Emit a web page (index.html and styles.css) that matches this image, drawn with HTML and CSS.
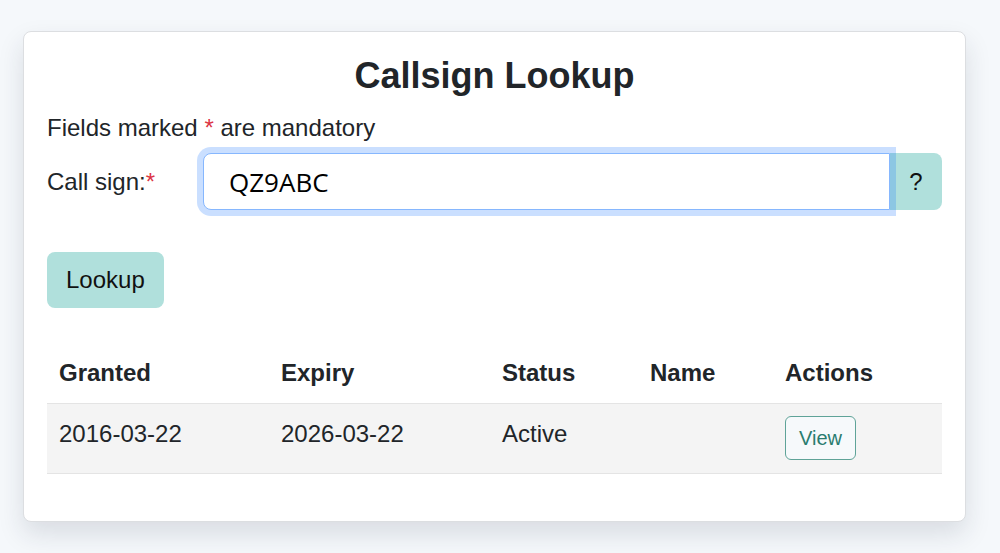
FILE: index.html
```html
<!DOCTYPE html>
<html lang="en">
<head>
<meta charset="utf-8">
<title>Callsign Lookup</title>
<link rel="stylesheet" href="styles.css">
</head>
<body>
<main class="card">
  <h1 class="title">Callsign Lookup</h1>
  <p class="note">Fields marked <span class="req">*</span> are mandatory</p>
  <div class="form-row">
    <label class="label" for="cs">Call sign:<span class="req">*</span></label>
    <div class="input-group">
      <input class="input" id="cs" type="text" value="QZ9ABC">
      <button class="help-btn" type="button">?</button>
    </div>
  </div>
  <button class="lookup-btn" type="button">Lookup</button>
  <table class="results">
    <thead>
      <tr>
        <th class="c1">Granted</th>
        <th class="c2">Expiry</th>
        <th class="c3">Status</th>
        <th class="c4">Name</th>
        <th class="c5">Actions</th>
      </tr>
    </thead>
    <tbody>
      <tr>
        <td>2016-03-22</td>
        <td>2026-03-22</td>
        <td>Active</td>
        <td></td>
        <td><button class="view-btn" type="button">View</button></td>
      </tr>
    </tbody>
  </table>
</main>
</body>
</html>
```

FILE: styles.css
```css
* { box-sizing: border-box; }

html, body {
  background: #f5f8fb;
}

body {
  margin: 0;
  min-height: 553px;
  font-family: "Liberation Sans", Arial, sans-serif;
  font-size: 24px;
  line-height: 36px;
  color: #212529;
}

.card {
  width: 943px;
  margin: 31px 0 0 23px;
  background: #fff;
  border: 1px solid #dcdee1;
  border-radius: 8px;
  padding: 23px 23px 47px;
  box-shadow: 0 12px 26px rgba(30, 40, 60, 0.13);
}

.title {
  margin: 0;
  font-size: 36px;
  line-height: 42px;
  font-weight: 700;
  text-align: center;
  color: #212529;
}

.note {
  margin: 13px 0 0;
}

.req { color: #dc3545; }

.form-row {
  display: flex;
  align-items: center;
  margin-top: 7px;
}

.label {
  width: 156px;
  flex: none;
}

.input-group {
  flex: 1;
  display: flex;
  height: 57px;
}

.input {
  position: relative;
  z-index: 1;
  flex: 1;
  min-width: 0;
  height: 57px;
  margin: 0;
  padding: 0 25px;
  border: 1px solid #86b7fe;
  border-radius: 8px 0 0 8px;
  box-shadow: 0 0 0 6px rgba(13, 110, 253, 0.22);
  outline: none;
  background: #fff;
  font-family: "Open Sans", "Noto Sans", sans-serif;
  font-size: 26px;
  color: #000;
}

.help-btn {
  width: 52px;
  height: 57px;
  flex: none;
  margin: 0;
  border: none;
  border-radius: 0 8px 8px 0;
  background: #b0e0dc;
  font-family: "Liberation Sans", Arial, sans-serif;
  font-size: 24px;
  color: #111;
  padding: 0;
}

.lookup-btn {
  display: block;
  margin-top: 42px;
  height: 56px;
  padding: 0 19px;
  border: none;
  border-radius: 8px;
  background: #b0e0dc;
  font-family: "Liberation Sans", Arial, sans-serif;
  font-size: 24px;
  color: #111;
}

.results {
  width: 100%;
  margin-top: 35px;
  border-collapse: collapse;
  table-layout: fixed;
}

.results th {
  text-align: left;
  font-weight: 700;
  padding: 12px 12px;
  line-height: 36px;
}

.c1 { width: 222px; }
.c2 { width: 221px; }
.c3 { width: 148px; }
.c4 { width: 135px; }

.results tbody tr {
  background: #f4f4f4;
  border-top: 1px solid #e4e4e4;
  border-bottom: 1px solid #e4e4e4;
}

.results td {
  padding: 12px 12px 13px;
  vertical-align: top;
  line-height: 36px;
}

.view-btn {
  display: block;
  height: 44px;
  padding: 0 13px;
  border: 1px solid #5fa398;
  border-radius: 6px;
  background: #f6f9fb;
  font-family: "Liberation Sans", Arial, sans-serif;
  font-size: 20px;
  color: #2a7c6f;
}
```
